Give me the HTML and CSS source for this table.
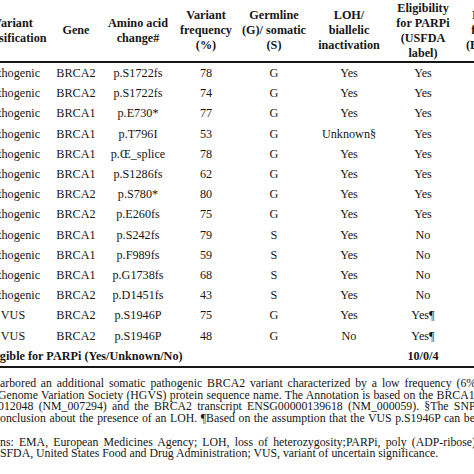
FILE: index.html
```html
<!DOCTYPE html>
<html lang="en">
<head>
<meta charset="utf-8">
<title>Table</title>
<link rel="stylesheet" href="styles.css">
</head>
<body>
<div class="sheet">
  <table class="grid">
    <colgroup>
      <col class="c1"><col class="c2"><col class="c3"><col class="c4"><col class="c5"><col class="c6"><col class="c7"><col class="c8">
    </colgroup>
    <thead>
      <tr>
        <th class="first">Variant<br>classification</th>
        <th>Gene</th>
        <th>Amino acid<br>change#</th>
        <th>Variant<br>frequency<br>(%)</th>
        <th>Germline<br>(G)/ somatic<br>(S)</th>
        <th>LOH/<br>biallelic<br>inactivation</th>
        <th>Eligibility<br>for PARPi<br>(USFDA<br>label)</th>
        <th>Eligibility<br>for PARPi<br>(EMA label)</th>
      </tr>
    </thead>
    <tbody>
      <tr><td class="first">Pathogenic</td><td>BRCA2</td><td>p.S1722fs</td><td>78</td><td>G</td><td>Yes</td><td>Yes</td><td></td></tr>
      <tr><td class="first">Pathogenic</td><td>BRCA2</td><td>p.S1722fs</td><td>74</td><td>G</td><td>Yes</td><td>Yes</td><td></td></tr>
      <tr><td class="first">Pathogenic</td><td>BRCA1</td><td>p.E730*</td><td>77</td><td>G</td><td>Yes</td><td>Yes</td><td></td></tr>
      <tr><td class="first">Pathogenic</td><td>BRCA1</td><td>p.T796I</td><td>53</td><td>G</td><td>Unknown§</td><td>Yes</td><td></td></tr>
      <tr><td class="first">Pathogenic</td><td>BRCA1</td><td>p.Œ_splice</td><td>78</td><td>G</td><td>Yes</td><td>Yes</td><td></td></tr>
      <tr><td class="first">Pathogenic</td><td>BRCA1</td><td>p.S1286fs</td><td>62</td><td>G</td><td>Yes</td><td>Yes</td><td></td></tr>
      <tr><td class="first">Pathogenic</td><td>BRCA2</td><td>p.S780*</td><td>80</td><td>G</td><td>Yes</td><td>Yes</td><td></td></tr>
      <tr><td class="first">Pathogenic</td><td>BRCA2</td><td>p.E260fs</td><td>75</td><td>G</td><td>Yes</td><td>Yes</td><td></td></tr>
      <tr><td class="first">Pathogenic</td><td>BRCA1</td><td>p.S242fs</td><td>79</td><td>S</td><td>Yes</td><td>No</td><td></td></tr>
      <tr><td class="first">Pathogenic</td><td>BRCA1</td><td>p.F989fs</td><td>59</td><td>S</td><td>Yes</td><td>No</td><td></td></tr>
      <tr><td class="first">Pathogenic</td><td>BRCA1</td><td>p.G1738fs</td><td>68</td><td>S</td><td>Yes</td><td>No</td><td></td></tr>
      <tr><td class="first">Pathogenic</td><td>BRCA2</td><td>p.D1451fs</td><td>43</td><td>S</td><td>Yes</td><td>No</td><td></td></tr>
      <tr><td class="first">VUS</td><td>BRCA2</td><td>p.S1946P</td><td>75</td><td>G</td><td>Yes</td><td>Yes¶</td><td></td></tr>
      <tr><td class="first">VUS</td><td>BRCA2</td><td>p.S1946P</td><td>48</td><td>G</td><td>No</td><td>Yes¶</td><td></td></tr>
      <tr class="total"><td class="label" colspan="6">Total eligible for PARPi (Yes/Unknown/No)</td><td>10/0/4</td><td></td></tr>
    </tbody>
  </table>
  <div class="notes">
    <div class="line l1">arbored an additional somatic pathogenic BRCA2 variant characterized by a low frequency (6%) in tumor</div>
    <div class="line l2 cut">Genome Variation Society (HGVS) protein sequence name. The Annotation is based on the BRCA1</div>
    <div class="line l3 cut">012048 (NM_007294) and the BRCA2 transcript ENSG00000139618 (NM_000059). §The SNP</div>
    <div class="line l4">onclusion about the presence of an LOH. ¶Based on the assumption that the VUS p.S1946P can be</div>
    <div class="blank"></div>
    <div class="line l5">ns: EMA, European Medicines Agency; LOH, loss of heterozygosity;PARPi, poly (ADP-ribose) polymerase</div>
    <div class="line l6">SFDA, United States Food and Drug Administration; VUS, variant of uncertain significance.</div>
  </div>
</div>
</body>
</html>
```

FILE: styles.css
```css
html, body {
  margin: 0;
  padding: 0;
  background: #ffffff;
}

body {
  width: 474px;
  height: 474px;
  overflow: hidden;
  color: #161616;
  font-family: "Liberation Serif", "Times New Roman", serif;
}

.sheet {
  width: 620px;
}

.grid {
  margin-left: -42px;
  border-collapse: separate;
  border-spacing: 0;
  table-layout: fixed;
  width: 582px;
  font-size: 12.2px;
}

.c1 { width: 90px; }
.c2 { width: 56px; }
.c3 { width: 68px; }
.c4 { width: 68px; }
.c5 { width: 68px; }
.c6 { width: 82px; }
.c7 { width: 66px; }
.c8 { width: 84px; }

.grid th {
  height: 61px;
  padding: 0;
  font-weight: bold;
  line-height: 15px;
  text-align: center;
  vertical-align: middle;
  border-bottom: 2px solid #161616;
  white-space: nowrap;
  box-sizing: content-box;
}

.grid th.first,
.grid td.first {
  padding-left: 20px;
}

.grid td {
  padding: 0;
  line-height: 20.2px;
  text-align: center;
  vertical-align: middle;
  white-space: nowrap;
}

.grid tr.total td {
  font-weight: bold;
  border-bottom: 2px solid #161616;
}

.grid tr.total td.label {
  text-align: left;
}

.notes {
  margin-top: 10px;
  font-size: 11.8px;
  line-height: 11.7px;
}

.notes .line {
  white-space: nowrap;
}

.notes .l1 { word-spacing: 1.9px; }
.notes .l2 { word-spacing: 0.4px; }
.notes .l3 { word-spacing: 2.3px; }
.notes .l4 { word-spacing: 0.6px; }
.notes .l5 { word-spacing: 2.2px; }

.notes .cut {
  margin-left: -2px;
}

.notes .blank {
  height: 11.7px;
}
```
